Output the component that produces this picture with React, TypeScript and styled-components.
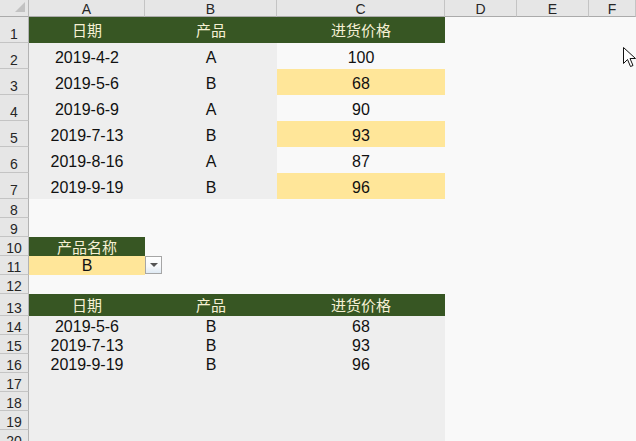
import React from 'react';
import styled, { createGlobalStyle, css } from 'styled-components';

const Global = createGlobalStyle`
  html, body { margin: 0; padding: 0; background: #f9f9f9; overflow: hidden; }
  #root { width: 636px; height: 441px; }
`;

const LATIN = `"Liberation Sans", Arial, sans-serif`;
const CJK = `"Noto Sans CJK SC", "Liberation Sans", sans-serif`;

type Fill = 'green' | 'yellow' | 'dither' | 'none';

const Page = styled.div`
  position: relative;
  width: 636px;
  height: 441px;
  overflow: hidden;
  background: #f9f9f9;
`;

const Sheet = styled.div`
  display: grid;
  grid-template-columns: 29px 116px 132px 168px 72px 72px 47px;
  grid-template-rows: 17px repeat(7, 26px) repeat(5, 19px) 22px repeat(7, 19px);
`;

const Corner = styled.div`
  position: relative;
  box-sizing: border-box;
  background: #e6e6e6;
  border-right: 1px solid #b8b8b8;
  border-bottom: 1px solid #ababab;
  display: flex;
  justify-content: flex-end;
  align-items: flex-start;
  padding: 2px 3px 0 0;
`;

const CornerTri = styled.div`
  width: 0;
  height: 0;
  border-left: 10px solid transparent;
  border-bottom: 10px solid #c2c2c2;
`;

const ColHead = styled.div`
  box-sizing: border-box;
  background: #e6e6e6;
  border-right: 1px solid #c4c4c4;
  border-bottom: 1px solid #ababab;
  display: flex;
  justify-content: center;
  align-items: flex-end;
  font-family: ${LATIN};
  font-size: 14px;
  line-height: 13px;
  color: #262626;
`;

const RowHead = styled.div<{ $tall: boolean }>`
  box-sizing: border-box;
  background: #e6e6e6;
  border-right: 1px solid #b3b3b3;
  border-bottom: 1px solid #c4c4c4;
  display: flex;
  justify-content: center;
  align-items: flex-end;
  padding-bottom: ${(p) => (p.$tall ? 1 : 0)}px;
  font-family: ${LATIN};
  font-size: 14px;
  line-height: 13px;
  color: #262626;
`;

const fills: Record<Fill, ReturnType<typeof css>> = {
  green: css`background: #375623; color: #f6f0d4;`,
  yellow: css`background: #ffe699; color: #111;`,
  dither: css`background: #eeeeee; color: #111;`,
  none: css`background: transparent; color: #111;`,
};

const Cell = styled.div<{ $fill: Fill; $cjk: boolean; $pb: number; $left?: boolean }>`
  box-sizing: border-box;
  display: flex;
  justify-content: ${(p) => (p.$left ? 'flex-start' : 'center')};
  align-items: flex-end;
  padding-bottom: ${(p) => p.$pb}px;
  font-family: ${(p) => (p.$cjk ? CJK : LATIN)};
  font-size: ${(p) => (p.$cjk ? 15 : 16)}px;
  line-height: 16px;
  white-space: nowrap;
  ${(p) => fills[p.$fill]}
`;

const DropButton = styled.div`
  align-self: flex-start;
  box-sizing: border-box;
  width: 17px;
  height: 18px;
  margin-bottom: 0;
  border: 1px solid #a6a6a6;
  background: linear-gradient(#ffffff 0%, #f6f8fb 60%, #dfeaf4 100%);
  display: flex;
  justify-content: center;
  align-items: flex-start;
  padding-top: 6px;
`;

const DropArrow = styled.div`
  width: 0;
  height: 0;
  border-left: 4px solid transparent;
  border-right: 4px solid transparent;
  border-top: 4px solid #555;
`;

const Cursor = styled.svg`
  position: absolute;
  left: 623px;
  top: 47px;
`;

type CellDef = { text?: string; fill: Fill; cjk?: boolean; drop?: boolean };

const COLS = ['A', 'B', 'C', 'D', 'E', 'F'];

const none: CellDef = { fill: 'none' };
const blank = (): CellDef[] => [none, none, none, none, none, none];

const head = (): CellDef[] => [
  { text: '日期', fill: 'green', cjk: true },
  { text: '产品', fill: 'green', cjk: true },
  { text: '进货价格', fill: 'green', cjk: true },
  none,
  none,
  none,
];

const src: [string, string, string][] = [
  ['2019-4-2', 'A', '100'],
  ['2019-5-6', 'B', '68'],
  ['2019-6-9', 'A', '90'],
  ['2019-7-13', 'B', '93'],
  ['2019-8-16', 'A', '87'],
  ['2019-9-19', 'B', '96'],
];

const filtered = src.filter((r) => r[1] === 'B');

type RowDef = { cells: CellDef[]; tall: boolean; pb: number };

const rows: RowDef[] = [];
rows.push({ cells: head(), tall: true, pb: 5 });
src.forEach(([d, p, v]) =>
  rows.push({
    cells: [
      { text: d, fill: 'dither' },
      { text: p, fill: 'dither' },
      { text: v, fill: p === 'B' ? 'yellow' : 'none' },
      none,
      none,
      none,
    ],
    tall: true,
    pb: 3,
  })
);
rows.push({ cells: blank(), tall: false, pb: 0 });
rows.push({ cells: blank(), tall: false, pb: 0 });
rows.push({
  cells: [{ text: '产品名称', fill: 'green', cjk: true }, none, none, none, none, none],
  tall: false,
  pb: 1,
});
rows.push({
  cells: [{ text: 'B', fill: 'yellow' }, { fill: 'none', drop: true }, none, none, none, none],
  tall: false,
  pb: 1,
});
rows.push({ cells: blank(), tall: false, pb: 0 });
rows.push({ cells: head(), tall: false, pb: 3 });
filtered.forEach(([d, p, v]) =>
  rows.push({
    cells: [
      { text: d, fill: 'dither' },
      { text: p, fill: 'dither' },
      { text: v, fill: 'dither' },
      none,
      none,
      none,
    ],
    tall: false,
    pb: 0,
  })
);
while (rows.length < 20) {
  rows.push({
    cells: [{ fill: 'dither' }, { fill: 'dither' }, { fill: 'dither' }, none, none, none],
    tall: false,
    pb: 0,
  });
}

export default function App() {
  return (
    <Page>
      <Global />
      <Sheet>
        <Corner>
          <CornerTri />
        </Corner>
        {COLS.map((c) => (
          <ColHead key={c}>{c}</ColHead>
        ))}
        {rows.map((r, i) => (
          <React.Fragment key={i}>
            <RowHead $tall={r.tall}>{i + 1}</RowHead>
            {r.cells.map((c, j) => (
              <Cell key={j} $fill={c.fill} $cjk={!!c.cjk} $pb={r.pb} $left={!!c.drop}>
                {c.drop ? (
                  <DropButton>
                    <DropArrow />
                  </DropButton>
                ) : (
                  c.text
                )}
              </Cell>
            ))}
          </React.Fragment>
        ))}
      </Sheet>
      <Cursor width="14" height="21" viewBox="0 0 14 21">
        <path
          d="M0.5 0.5 L0.5 16.5 L4.5 12.5 L7.5 19.5 L10 18.5 L7 11.5 L12.5 11.5 Z"
          fill="#ffffff"
          stroke="#111111"
          strokeWidth="1"
          strokeLinejoin="miter"
        />
      </Cursor>
    </Page>
  );
}
